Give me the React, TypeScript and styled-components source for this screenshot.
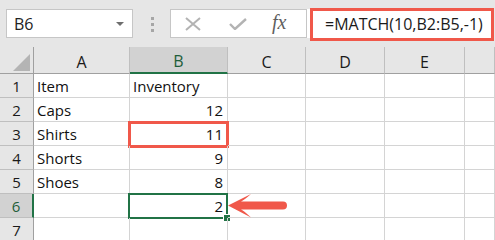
import React from "react";
import styled, { createGlobalStyle } from "styled-components";

const GlobalStyle = createGlobalStyle`
  html, body {
    margin: 0;
    padding: 0;
    background: #e6e6e6;
    font-family: "Open Sans", "Liberation Sans", sans-serif;
  }
  * { box-sizing: border-box; }
`;

const columns = [
  { key: "A", width: 96 },
  { key: "B", width: 98 },
  { key: "C", width: 78 },
  { key: "D", width: 79 },
  { key: "E", width: 80 },
];

const rows: { item: string; value: string }[] = [
  { item: "Item", value: "Inventory" },
  { item: "Caps", value: "12" },
  { item: "Shirts", value: "11" },
  { item: "Shorts", value: "9" },
  { item: "Shoes", value: "8" },
  { item: "", value: "2" },
  { item: "", value: "" },
];

const App: React.FC = () => {
  return (
    <Page>
      <GlobalStyle />
      <Toolbar>
        <NameBox>
          <span>B6</span>
          <DropArrow />
        </NameBox>
        <Grip>
          <i />
          <i />
          <i />
        </Grip>
        <FxBox>
          <svg width="16" height="14" viewBox="0 0 16 14">
            <path d="M1 1 L15 13 M15 1 L1 13" stroke="#b3b3b3" strokeWidth="2" fill="none" />
          </svg>
          <svg width="18" height="12" viewBox="0 0 18 12">
            <path d="M1 6 L6 11 L17 1" stroke="#b3b3b3" strokeWidth="2.4" fill="none" />
          </svg>
          <FxLabel>fx</FxLabel>
        </FxBox>
        <FormulaWrap>
          <FormulaField>=MATCH(10,B2:B5,-1)</FormulaField>
        </FormulaWrap>
      </Toolbar>
      <Sheet>
        <Corner>
          <svg width="18" height="17" viewBox="0 0 18 17">
            <polygon points="17,0 17,17 0,17" fill="#b4b4b4" />
          </svg>
        </Corner>
        {columns.map((c) => (
          <ColHeader key={c.key} $selected={c.key === "B"}>
            {c.key}
          </ColHeader>
        ))}
        <ColHeader $selected={false} />
        {rows.map((r, i) => {
          const n = i + 1;
          return (
            <React.Fragment key={n}>
              <RowHeader $selected={n === 6}>{n}</RowHeader>
              <Cell>{r.item}</Cell>
              <Cell $numeric={n > 1}>
                {r.value}
                {n === 3 && <Highlight />}
                {n === 6 && (
                  <Selection>
                    <FillHandle />
                  </Selection>
                )}
              </Cell>
              <Cell />
              <Cell />
              <Cell />
              <Cell />
            </React.Fragment>
          );
        })}
        <Arrow width="62" height="25" viewBox="0 0 62 25">
          <path
            d="M0 11.5 L23 0 Q15 7 13 7.5 L55 7.5 A4 4 0 0 1 55 15.5 L13 15.5 Q15 16 23 23.5 Z"
            fill="#f0584a"
          />
        </Arrow>
      </Sheet>
    </Page>
  );
};

const Page = styled.div`
  width: 495px;
  height: 240px;
  overflow: hidden;
  background: #e6e6e6;
`;

const Toolbar = styled.div`
  height: 47px;
  display: flex;
  align-items: flex-start;
  padding-top: 8px;
`;

const NameBox = styled.div`
  margin: 1px 0 0 6px;
  width: 127px;
  height: 29px;
  background: #fff;
  border: 1px solid #c6c6c6;
  display: flex;
  align-items: center;
  justify-content: space-between;
  padding: 0 8px 0 7px;
  font-size: 16px;
  color: #222;
`;

const DropArrow = styled.div`
  width: 0;
  height: 0;
  border-left: 4px solid transparent;
  border-right: 4px solid transparent;
  border-top: 4px solid #6e6e6e;
`;

const Grip = styled.div`
  margin: 9px 0 0 18px;
  width: 3px;
  display: flex;
  flex-direction: column;
  gap: 3px;
  i {
    display: block;
    width: 3px;
    height: 3px;
    background: #a6a6a6;
  }
`;

const FxBox = styled.div`
  margin: 1px 0 0 16px;
  width: 137px;
  height: 29px;
  background: #fff;
  border: 1px solid #c6c6c6;
  display: flex;
  align-items: center;
  padding-left: 14px;
  gap: 29px;
  svg:nth-child(2) {
    margin-left: -1px;
  }
`;

const FxLabel = styled.span`
  font-family: "Liberation Serif", serif;
  font-style: italic;
  font-size: 20px;
  color: #5f5f5f;
  margin: -2px 0 0 -4px;
`;

const FormulaWrap = styled.div`
  flex: 1;
  height: 33px;
  margin-right: 1px;
  background: linear-gradient(#fff, #fff) no-repeat 0 1px / 4px 29px;
  padding-left: 3px;
`;

const FormulaField = styled.div`
  height: 33px;
  border: 3px solid #f0584a;
  background: #fff;
  display: flex;
  align-items: center;
  padding: 0 0 1px 12px;
  font-size: 16px;
  color: #1a1a1a;
`;

const Sheet = styled.div`
  position: relative;
  display: grid;
  grid-template-columns: 34px ${columns.map((c) => `${c.width}px`).join(" ")} 1fr;
  grid-template-rows: 27px;
  grid-auto-rows: 24px;
  background: #fff;
  height: 193px;
`;

const Corner = styled.div`
  background: #e6e6e6;
  border-right: 1px solid #a0a0a0;
  border-bottom: 1px solid #a0a0a0;
  display: flex;
  align-items: flex-end;
  justify-content: flex-end;
  padding: 0 2px 2px 0;
`;

const ColHeader = styled.div<{ $selected: boolean }>`
  background: ${(p) => (p.$selected ? "#d2d2d2" : "#e6e6e6")};
  border-right: 1px solid #bfbfbf;
  border-bottom: ${(p) => (p.$selected ? "2px solid #217346" : "1px solid #a0a0a0")};
  color: ${(p) => (p.$selected ? "#1e5e3a" : "#1a1a1a")};
  font-size: 16px;
  display: flex;
  align-items: center;
  justify-content: center;
  padding-top: 3px;
`;

const RowHeader = styled.div<{ $selected: boolean }>`
  background: ${(p) => (p.$selected ? "#d2d2d2" : "#e6e6e6")};
  border-right: ${(p) => (p.$selected ? "2px solid #217346" : "1px solid #a0a0a0")};
  border-bottom: 1px solid #bfbfbf;
  color: ${(p) => (p.$selected ? "#1e5e3a" : "#1a1a1a")};
  font-size: 15px;
  line-height: 20px;
  display: flex;
  align-items: flex-end;
  justify-content: center;
  padding-bottom: 1px;
`;

const Cell = styled.div<{ $numeric?: boolean }>`
  position: relative;
  border-right: 1px solid #d4d4d4;
  border-bottom: 1px solid #d4d4d4;
  font-size: 15px;
  line-height: 20px;
  color: #111;
  display: flex;
  align-items: flex-end;
  justify-content: ${(p) => (p.$numeric ? "flex-end" : "flex-start")};
  padding: 0 4px 1px 3px;
  white-space: nowrap;
`;

const Highlight = styled.div`
  position: absolute;
  left: -2px;
  top: -1px;
  width: 101px;
  height: 27px;
  border: 3px solid #f0584a;
`;

const Selection = styled.div`
  position: absolute;
  left: -2px;
  top: -1px;
  width: 100px;
  height: 26px;
  border: 2px solid #217346;
`;

const FillHandle = styled.div`
  position: absolute;
  right: -4px;
  bottom: -4px;
  width: 6px;
  height: 6px;
  background: #217346;
  outline: 1px solid #fff;
`;

const Arrow = styled.svg`
  position: absolute;
  left: 228px;
  top: 147px;
`;

export default App;
